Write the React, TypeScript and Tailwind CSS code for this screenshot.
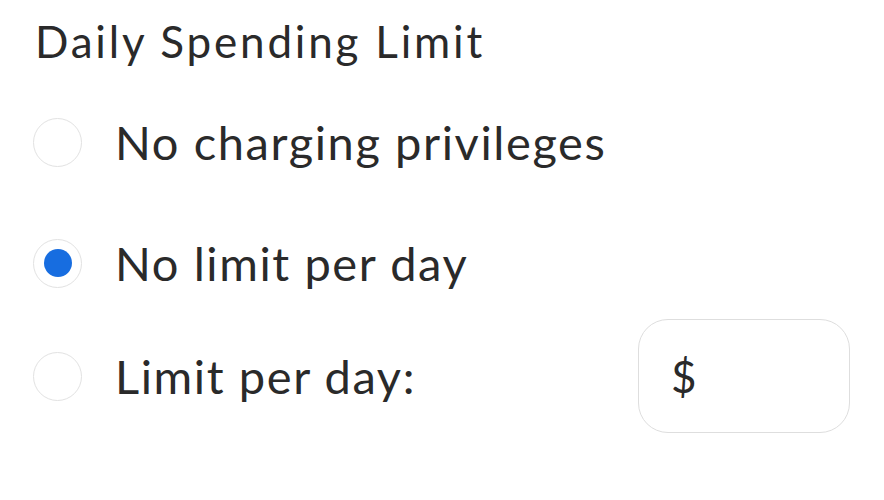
import React from "react";

function Radio({ checked }: { checked?: boolean }) {
  return (
    <div className="w-[49px] h-[49px] rounded-full border-[1.5px] border-[#e2e2e2] bg-white flex items-center justify-center shrink-0">
      {checked && <div className="w-[28px] h-[28px] rounded-full bg-[#176de0]" />}
    </div>
  );
}

export default function App() {
  return (
    <div
      className="w-[884px] h-[500px] bg-white text-[#2a2a2a] overflow-hidden"
      style={{ fontFamily: "Lato, 'Noto Sans', sans-serif" }}
    >
      <div className="pl-[35px] pt-[15px] text-[44px] leading-[52px] tracking-[2.8px]">Daily Spending Limit</div>
      <div className="flex flex-col pl-[33px] pr-[34px]">
        <div className="flex items-center h-[50px] mt-[50px] gap-[33px]">
          <Radio />
          <span className="text-[47px] leading-none tracking-[1.6px]">No charging privileges</span>
        </div>
        <div className="flex items-center h-[50px] mt-[71px] gap-[33px]">
          <Radio checked />
          <span className="text-[47px] leading-none tracking-[1.6px]">No limit per day</span>
        </div>
        <div className="flex items-center mt-[31px] gap-[33px]">
          <Radio />
          <span className="text-[47px] leading-none tracking-[1.6px] flex-1">Limit per day:</span>
          <div className="w-[212px] h-[114px] rounded-[30px] border-[1.5px] border-[#dedede] flex items-center pl-[32px] text-[44px]">
            $
          </div>
        </div>
      </div>
    </div>
  );
}
